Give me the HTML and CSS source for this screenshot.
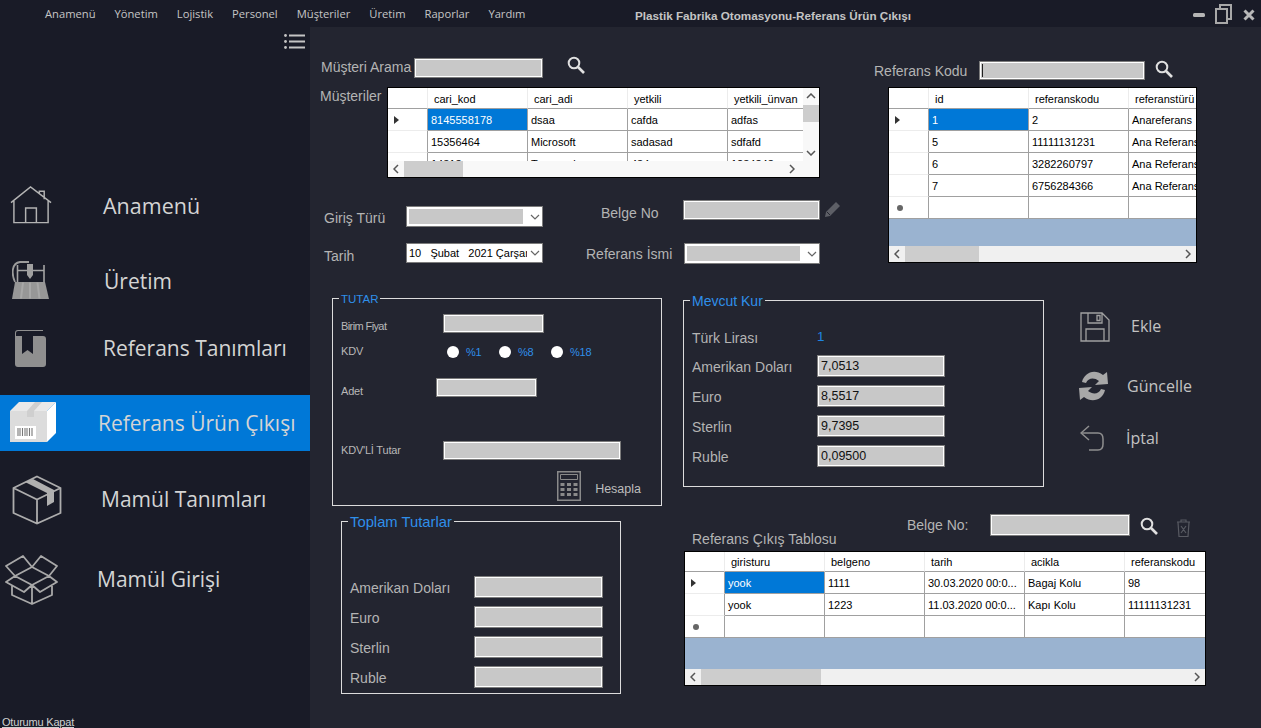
FILE: index.html
```html
<!DOCTYPE html>
<html lang="tr">
<head>
<meta charset="utf-8">
<title>Plastik Fabrika Otomasyonu-Referans Ürün Çıkışı</title>
<link rel="stylesheet" href="styles.css">
</head>
<body>
<div class="app">
  <header class="titlebar">
    <nav class="menu">
      <span>Anamenü</span><span>Yönetim</span><span>Lojistik</span><span>Personel</span><span>Müşteriler</span><span>Üretim</span><span>Raporlar</span><span>Yardım</span>
    </nav>
    <div class="title">Plastik Fabrika Otomasyonu-Referans Ürün Çıkışı</div>
    <div class="winbtns">
      <svg class="wb-min" viewBox="0 0 12 4"><rect width="12" height="4" rx="1.5" fill="#b5b5b5"/></svg>
      <svg class="wb-max" viewBox="0 0 17 20"><path d="M5 5V1h11v14h-4M1 5h11v14H1z" fill="none" stroke="#a8a8a8" stroke-width="2"/></svg>
      <svg class="wb-close" viewBox="0 0 12 12"><path d="M1.5 1.5l9 9M10.500 1.500l-9 9" stroke="#b8b8b8" stroke-width="3"/></svg>
    </div>
  </header>
  <div class="body">
    <aside class="sidebar">
      <div class="hamburger">
        <svg viewBox="0 0 21 15" class="ham-icon"><g fill="#c4c4c4"><circle cx="1.500" cy="1.500" r="1.400"/><circle cx="1.500" cy="7.500" r="1.400"/><circle cx="1.500" cy="13.500" r="1.400"/><rect x="5" y="0.500" width="16" height="2"/><rect x="5" y="6.500" width="16" height="2"/><rect x="5" y="12.500" width="16" height="2"/></g></svg>
      </div>
      <ul class="side-list">
        <li class="side-item si-home">
          <svg class="si-icon ic-home" viewBox="0 0 44 42"><path d="M1 17.500L21 1.500l21 16M4 16v22h35V16M16 38V23h11v15M30 9V6h5v8" fill="none" stroke="#b3b3b3" stroke-width="1.500"/></svg>
          <span>Anamenü</span>
        </li>
        <li class="side-item si-uretim">
          <svg class="si-icon ic-cnc" viewBox="0 0 38 38"><path d="M3 21C-1 12 0 2 8 1h9" fill="none" stroke="#9c9c9c" stroke-width="1.800"/><path d="M5.500 4v17M32 4v17M5.500 9.500H32" stroke="#a4a4a4" stroke-width="1.600" fill="none"/><path d="M15 3h6v11l-3 4-3-4z" fill="#a0a0a0"/><path d="M3 21h30l4 17H0z" fill="#979797"/><path d="M11 21.500l-2 16M18 21.500v16M25.500 21.500l2 16" stroke="#a8a8a8" stroke-width="2"/></svg>
          <span>Üretim</span>
        </li>
        <li class="side-item si-tanim">
          <svg class="si-icon ic-book" viewBox="0 0 31 37"><path d="M0 3Q0 0 3 0h25v1H3Q1 1 1 3v3h27q3 0 3 3v25q0 3-3 3H3q-3 0-3-3z" fill="#8f8f8f"/><path d="M7 6h11v18l-5.500-4-5.500 4z" fill="#191b27"/></svg>
          <span>Referans Tanımları</span>
        </li>
        <li class="side-item si-cikis active">
          <svg class="si-icon ic-pack" viewBox="0 0 46 40"><path d="M0 9L9 0h37l-9 9z" fill="#e9e9e9"/><path d="M0 9h37v31H0z" fill="#dcdcdc"/><path d="M37 9l9-9v31l-9 9z" fill="#fff"/><path d="M24 9l8-9h-7l-8 9v6h7z" fill="#cfcfcf"/><rect x="5" y="24" width="21" height="13" fill="#fff"/><path d="M8 26v8M10 26v8M12.500 26v8M15 26v8M17 26v8M19.500 26v8M22 26v8" stroke="#777" stroke-width="1.100"/></svg>
          <span>Referans Ürün Çıkışı</span>
        </li>
        <li class="side-item si-mamul">
          <svg class="si-icon ic-box" viewBox="0 0 50 50"><path d="M25 1.500L48.500 13v25L25 48.500 1.500 38V13zM1.500 13L25 24.500 48.500 13M25 24.500v24" fill="none" stroke="#adadad" stroke-width="1.800"/><path d="M13 7l22 11v13l7-4V15L21 4z" fill="#b0b0b0"/></svg>
          <span>Mamül Tanımları</span>
        </li>
        <li class="side-item si-giris">
          <svg class="si-icon ic-open" viewBox="0 0 53 50"><path d="M27 12L10 21l17 9 17-9zM10 21L1 27l18 10 8-7 8 7 17-10-8-6M27 30v19M7 31v9l20 9 20-9v-9M27 12L18 1 1 11l9 10M27 12l9-11 16 10-8 10" fill="none" stroke="#a8a8a8" stroke-width="1.800" stroke-linejoin="round"/></svg>
          <span>Mamül Girişi</span>
        </li>
      </ul>
      <a class="logout">Oturumu Kapat</a>
    </aside>

    <main class="main">
      <section class="upper">
        <div class="upper-left">
          <div class="search-row">
            <label class="lbl lbl-musteri">Müşteri Arama</label>
            <div class="field f-search"></div>
            <svg class="ic-search s-one" viewBox="0 0 18 18"><circle cx="7" cy="7" r="5.300" fill="none" stroke="#e0e0e0" stroke-width="2"/><path d="M11 11l6 6" stroke="#e0e0e0" stroke-width="2.600"/></svg>
          </div>
          <div class="customers-row">
            <label class="lbl lbl-cust">Müşteriler</label>
            <div class="dgv dgv-cust">
              <div class="dgv-view">
                <table class="dg">
                  <colgroup><col class="c-head"><col class="c-data"><col class="c-data"><col class="c-data"><col class="c-data"></colgroup>
                  <thead><tr><th></th><th>cari_kod</th><th>cari_adi</th><th>yetkili</th><th>yetkili_ünvan</th></tr></thead>
                  <tbody>
                    <tr><td class="rh"><i class="cur"></i></td><td class="sel">8145558178</td><td>dsaa</td><td>cafda</td><td>adfas</td></tr>
                    <tr><td class="rh"></td><td>15356464</td><td>Microsoft</td><td>sadasad</td><td>sdfafd</td></tr>
                    <tr><td class="rh"></td><td>14313</td><td>Tomurcuk</td><td>434</td><td>1234343</td></tr>
                  </tbody>
                </table>
              </div>
              <div class="vbar">
                <svg class="chev" viewBox="0 0 10 6"><path d="M1 5l4-4 4 4" fill="none" stroke="#555" stroke-width="1.500"/></svg>
                <div class="vthumb"></div>
                <svg class="chev chev-end" viewBox="0 0 10 6"><path d="M1 1l4 4 4-4" fill="none" stroke="#555" stroke-width="1.500"/></svg>
              </div>
              <div class="hbar">
                <svg class="chev-h" viewBox="0 0 6 10"><path d="M5 1L1 5l4 4" fill="none" stroke="#555" stroke-width="1.500"/></svg>
                <div class="hthumb th-cust"></div>
                <svg class="chev-h chev-end-h" viewBox="0 0 6 10"><path d="M1 1l4 4-4 4" fill="none" stroke="#555" stroke-width="1.500"/></svg>
              </div>
            </div>
          </div>
          <div class="entry-grid">
            <label class="lbl eg-giris">Giriş Türü</label>
            <div class="combo eg-combo"><div class="combo-fill"></div><svg class="chev-d" viewBox="0 0 10 6"><path d="M1 1l4 4 4-4" fill="none" stroke="#666" stroke-width="1.200"/></svg></div>
            <label class="lbl eg-belge">Belge No</label>
            <div class="eg-belgebox">
              <div class="field f-belge"></div>
              <svg class="ic-pencil" viewBox="0 0 17 17"><path d="M1 16l1-5L12 1l4 4L6 15z" fill="#5d5f66"/><path d="M3 11l3 3" stroke="#23252f" stroke-width="1"/></svg>
            </div>
            <label class="lbl eg-tarih">Tarih</label>
            <div class="combo date"><span class="date-text">10&nbsp;&nbsp;&nbsp;Şubat&nbsp;&nbsp;&nbsp;2021 Çarşamba</span><svg class="chev-d" viewBox="0 0 10 6"><path d="M1 1l4 4 4-4" fill="none" stroke="#666" stroke-width="1.200"/></svg></div>
            <label class="lbl eg-ref">Referans İsmi</label>
            <div class="combo eg-refcombo"><div class="combo-fill"></div><svg class="chev-d" viewBox="0 0 10 6"><path d="M1 1l4 4 4-4" fill="none" stroke="#666" stroke-width="1.200"/></svg></div>
          </div>
        </div>
        <div class="upper-right">
          <div class="search-row ref-search">
            <label class="lbl lbl-refkod">Referans Kodu</label>
            <div class="field f-ref"><i class="caret"></i></div>
            <svg class="ic-search" viewBox="0 0 18 18"><circle cx="7" cy="7" r="5.300" fill="none" stroke="#e0e0e0" stroke-width="2"/><path d="M11 11l6 6" stroke="#e0e0e0" stroke-width="2.600"/></svg>
          </div>
          <div class="dgv dgv-ref">
            <div class="dgv-view blue">
              <table class="dg">
                <colgroup><col class="c-head"><col class="c-data"><col class="c-data"><col class="c-data"></colgroup>
                <thead><tr><th></th><th>id</th><th>referanskodu</th><th>referanstürü</th></tr></thead>
                <tbody>
                  <tr><td class="rh"><i class="cur"></i></td><td class="sel">1</td><td>2</td><td>Anareferans</td></tr>
                  <tr><td class="rh"></td><td>5</td><td>11111131231</td><td>Ana Referans</td></tr>
                  <tr><td class="rh"></td><td>6</td><td>3282260797</td><td>Ana Referans</td></tr>
                  <tr><td class="rh"></td><td>7</td><td>6756284366</td><td>Ana Referans</td></tr>
                  <tr><td class="rh"><i class="star"></i></td><td></td><td></td><td></td></tr>
                </tbody>
              </table>
            </div>
            <div class="hbar">
              <svg class="chev-h" viewBox="0 0 6 10"><path d="M5 1L1 5l4 4" fill="none" stroke="#555" stroke-width="1.500"/></svg>
              <div class="hthumb th-ref"></div>
              <svg class="chev-h chev-end-h" viewBox="0 0 6 10"><path d="M1 1l4 4-4 4" fill="none" stroke="#555" stroke-width="1.500"/></svg>
            </div>
          </div>
        </div>
      </section>

      <section class="lower">
        <div class="lower-left">
          <div class="group g-tutar">
            <span class="legend lg-tutar">TUTAR</span>
            <div class="t-row tr-birim"><label class="sm">Birim Fiyat</label><div class="field f-tutar"></div></div>
            <div class="t-row tr-kdv">
              <label class="sm">KDV</label>
              <div class="radios">
                <span class="radio"></span><span class="radio-l r-1">%1</span>
                <span class="radio"></span><span class="radio-l r-8">%8</span>
                <span class="radio"></span><span class="radio-l">%18</span>
              </div>
            </div>
            <div class="t-row tr-adet"><label class="sm">Adet</label><div class="field f-tutar"></div></div>
            <div class="t-row tr-kdvli"><label class="sm">KDV'Lİ Tutar</label><div class="field f-kdvli"></div></div>
            <div class="calc-row">
              <svg class="ic-calc" viewBox="0 0 24 30"><path d="M.750.750h22.500v28.500H.750z" fill="none" stroke="#8a8a8a" stroke-width="1.500"/><path d="M3.500 3.500h17v5h-17z" fill="none" stroke="#8a8a8a"/><path d="M3.500 12h4v3h-4zM10 12h4v3h-4zM16.500 12h4v3h-4zM3.500 17h4v3h-4zM10 17h4v3h-4zM16.500 17h4v3h-4zM3.500 22h4v3h-4zM10 22h4v3h-4zM16.500 22h4v3h-4z" fill="#8a8a8a"/></svg>
              <span class="hesapla">Hesapla</span>
            </div>
          </div>
          <div class="group g-toplam">
            <span class="legend lg-toplam">Toplam Tutarlar</span>
            <div class="rate-row"><label class="lbl">Amerikan Doları</label><div class="field f-total"></div></div>
            <div class="rate-row"><label class="lbl">Euro</label><div class="field f-total"></div></div>
            <div class="rate-row"><label class="lbl">Sterlin</label><div class="field f-total"></div></div>
            <div class="rate-row"><label class="lbl">Ruble</label><div class="field f-total"></div></div>
          </div>
        </div>
        <div class="lower-right">
          <div class="kur-actions">
            <div class="group g-kur">
              <span class="legend lg-kur">Mevcut Kur</span>
              <div class="lira-row"><label class="lbl">Türk Lirası</label><span class="lira">1</span></div>
              <div class="rate-row kr"><label class="lbl">Amerikan Doları</label><div class="field f-kur">7,0513</div></div>
              <div class="rate-row kr"><label class="lbl">Euro</label><div class="field f-kur">8,5517</div></div>
              <div class="rate-row kr"><label class="lbl">Sterlin</label><div class="field f-kur">9,7395</div></div>
              <div class="rate-row kr"><label class="lbl">Ruble</label><div class="field f-kur">0,09500</div></div>
            </div>
            <div class="actions">
              <div class="action a-ekle">
                <svg class="ic-save" viewBox="0 0 30 30"><path d="M1 1h21l7 7v21H1zM8 1v10h14V1M6 29V17h18v12M17 3.500h3v5h-3z" fill="none" stroke="#a0a0a0" stroke-width="1.300"/></svg>
                <span>Ekle</span>
              </div>
              <div class="action a-guncel">
                <svg class="ic-refresh" viewBox="0 0 33 34"><path d="M5 13C7 4 17-1 26 6l4-3 1 12-13 1 4-4c-5-4-11-3-13 2z" fill="#a8a8a8"/><path d="M28 21c-2 9-12 14-21 7l-4 3-1-12 13-1-4 4c5 4 11 3 13-2z" fill="#a8a8a8"/></svg>
                <span>Güncelle</span>
              </div>
              <div class="action a-iptal">
                <svg class="ic-back" viewBox="0 0 24 26"><path d="M9 1L1 8l8 7" fill="none" stroke="#8f8f8f" stroke-width="1.500"/><path d="M1 8h17q5 0 5 6v5q0 6-5 6H9" fill="none" stroke="#8f8f8f" stroke-width="1.500"/></svg>
                <span>İptal</span>
              </div>
            </div>
          </div>
          <div class="out-head">
            <label class="lbl out-title">Referans Çıkış Tablosu</label>
            <label class="lbl out-belge">Belge No:</label>
            <div class="field f-out"></div>
            <svg class="ic-search s-out" viewBox="0 0 18 18"><circle cx="7" cy="7" r="5.300" fill="none" stroke="#e0e0e0" stroke-width="2"/><path d="M11 11l6 6" stroke="#e0e0e0" stroke-width="2.600"/></svg>
            <svg class="ic-trash" viewBox="0 0 15 18"><path d="M1 3h13M5 2.500V1h5v1.500M2 3.500l1 14h9l1-14M5 7l5 7M10 7l-5 7" fill="none" stroke="#585a62" stroke-width="1.200"/></svg>
          </div>
          <div class="dgv dgv-out">
            <div class="dgv-view blue">
              <table class="dg">
                <colgroup><col class="c-head"><col class="c-data"><col class="c-data"><col class="c-data"><col class="c-data"><col class="c-data"></colgroup>
                <thead><tr><th></th><th>giristuru</th><th>belgeno</th><th>tarih</th><th>acikla</th><th>referanskodu</th></tr></thead>
                <tbody>
                  <tr><td class="rh"><i class="cur"></i></td><td class="sel">yook</td><td>1111</td><td>30.03.2020 00:0...</td><td>Bagaj Kolu</td><td>98</td></tr>
                  <tr><td class="rh"></td><td>yook</td><td>1223</td><td>11.03.2020 00:0...</td><td>Kapı Kolu</td><td>11111131231</td></tr>
                  <tr><td class="rh"><i class="star"></i></td><td></td><td></td><td></td><td></td><td></td></tr>
                </tbody>
              </table>
            </div>
            <div class="hbar">
              <svg class="chev-h" viewBox="0 0 6 10"><path d="M5 1L1 5l4 4" fill="none" stroke="#555" stroke-width="1.500"/></svg>
              <div class="hthumb th-out"></div>
              <svg class="chev-h chev-end-h" viewBox="0 0 6 10"><path d="M1 1l4 4-4 4" fill="none" stroke="#555" stroke-width="1.500"/></svg>
            </div>
          </div>
        </div>
      </section>
    </main>
  </div>
</div>
</body>
</html>
```

FILE: styles.css
```css
* { box-sizing: border-box; }
html, body { margin: 0; padding: 0; }
body { width: 1261px; height: 728px; overflow: hidden; background: #232530; font-family: "Liberation Sans", Arial, sans-serif; }
.app { width: 1261px; height: 728px; display: flex; flex-direction: column; }

/* title bar */
.titlebar { height: 27px; flex: none; background: #191b27; display: flex; align-items: center; }
.menu { width: 635px; flex: none; padding-left: 45px; display: flex; gap: 19px; font: 11.2px "Open Sans", sans-serif; color: #c6c6c6; margin-top: -1px; }
.title { font: bold 11.7px "Liberation Sans", sans-serif; color: #c4c4c4; margin-top: 4px; white-space: nowrap; }
.winbtns { margin-left: auto; display: flex; align-items: center; padding-right: 6px; }
.wb-min { width: 12px; height: 4px; margin-top: 2px; }
.wb-max { width: 17px; height: 20px; margin-left: 10px; }
.wb-close { width: 12px; height: 12px; margin-left: 11px; margin-top: 3px; }

/* sidebar */
.body { flex: 1; display: flex; min-height: 0; }
.sidebar { width: 310px; flex: none; background: #191b27; display: flex; flex-direction: column; }
.hamburger { height: 151px; display: flex; justify-content: flex-end; padding: 7px 5px 0 0; flex: none; }
.ham-icon { width: 21px; height: 15px; }
.side-list { list-style: none; margin: 0; padding: 0; font: 21px "Open Sans", sans-serif; color: #d4d4d4; flex: none; }
.side-item { height: 56px; display: flex; align-items: center; }
.si-icon { flex: none; }
.si-home { padding-left: 10px; font-size: 21.5px; }
.si-home span, .si-mamul span, .si-giris span { margin-bottom: 2px; }
.ic-home { width: 43px; height: 42px; margin-right: 50px; }
.si-uretim { margin-top: 19px; padding-left: 12px; }
.ic-cnc { width: 38px; height: 38px; margin-right: 54px; margin-top: -2px; }
.si-tanim { margin-top: 11px; padding-left: 15px; }
.ic-book { width: 31px; height: 37px; margin-right: 57px; }
.si-cikis { margin-top: 19px; padding-left: 10px; }
.ic-pack { width: 46px; height: 40px; margin-right: 42px; margin-top: -3px; }
.active { background: #0078d7; }
.si-mamul { margin-top: 21px; padding-left: 12px; }
.ic-box { width: 50px; height: 50px; margin-right: 39px; }
.si-giris { margin-top: 24px; padding-left: 5px; }
.ic-open { width: 53px; height: 50px; margin-right: 39px; }
.logout { margin-top: auto; padding-left: 2px; font: 11px "Liberation Sans", sans-serif; letter-spacing: -.2px; color: #d0d0d0; text-decoration: underline; line-height: 12px; }

/* main */
.main { flex: 1; min-width: 0; display: flex; flex-direction: column; }
.lbl { font-size: 14px; color: #b4b4b4; line-height: 16px; white-space: nowrap; }
.field { border: 1px solid #7c7c7c; box-shadow: inset 0 0 0 1px #fff; background: #c8c8c8; font-size: 13px; color: #111; }
.upper { height: 238px; flex: none; display: flex; }
.upper-left { width: 564px; flex: none; padding-top: 31px; }
.search-row { display: flex; align-items: flex-start; padding-left: 11px; height: 29px; }
.search-row .lbl { margin-top: 1px; }
.lbl-musteri { width: 93px; flex: none; }
.f-search { width: 129px; height: 20px; flex: none; }
.ic-search { width: 18px; height: 18px; flex: none; }
.s-one { margin-left: 24px; margin-top: -2px; }
.customers-row { display: flex; padding-left: 10px; align-items: flex-start; }
.lbl-cust { width: 67px; margin-top: 1px; flex: none; }
.dgv { border: 1px solid #000; background: #fff; display: grid; overflow: hidden; }
.dgv-cust { width: 433px; height: 91px; grid-template-columns: 415px 16px; grid-template-rows: 73px 16px; }
.dgv-view { overflow: hidden; min-width: 0; min-height: 0; background: #fff; }
.blue { background: #9ab3d0; }
.dg { border-collapse: separate; border-spacing: 0; table-layout: fixed; font-size: 11px; color: #000; background: #fff; }
.dgv-cust .dg { width: 440px; }
.dgv-ref .dg { width: 340px; }
.dgv-out .dg { width: 540px; }
.c-head { width: 40px; }
.c-data { width: 100px; }
.dg th { height: 21px; padding: 1px 0 0 6px; font-weight: normal; text-align: left; border-right: 1px solid #ececec; border-bottom: 1px solid #a0a0a0; background: #fff; overflow: hidden; white-space: nowrap; }
.dgv-out .dg th { height: 20px; }
.dg td { height: 22px; padding: 0 0 0 3px; border-right: 1px solid #a0a0a0; border-bottom: 1px solid #a0a0a0; overflow: hidden; white-space: nowrap; background: #fff; }
.dg td.rh { border-right: 1px solid #a0a0a0; border-bottom: 1px solid #ececec; padding: 0 0 0 6px; }
.dg tr:last-child td.rh { border-bottom-color: #a0a0a0; }
.dg td.sel { background: #0078d7; color: #fff; }
.cur { display: block; width: 0; height: 0; border-left: 5px solid #333; border-top: 4.500px solid transparent; border-bottom: 4.500px solid transparent; }
.star { display: block; width: 6px; height: 6px; border-radius: 50%; background: #666; margin-left: 2px; }
.vbar { background: #f8f8f8; grid-row: 1; grid-column: 2; display: flex; flex-direction: column; align-items: center; padding-top: 5px; }
.chev { width: 10px; height: 6px; flex: none; }
.chev-end { margin-top: auto; margin-bottom: 5px; }
.vthumb { width: 16px; height: 17px; background: #cdcdcd; margin-top: 6px; }
.hbar { background: #f0f0f0; display: flex; align-items: center; padding: 0 5px; height: 16px; }
.dgv-cust .hbar { grid-row: 2; grid-column: 1 / 3; background: #f8f8f8; }
.chev-h { width: 6px; height: 10px; flex: none; }
.chev-end-h { margin-left: auto; }
.dgv-cust .chev-end-h { margin-right: 19px; }
.hthumb { height: 16px; background: #cdcdcd; flex: none; margin-left: 5px; }
.th-cust { width: 59px; }
.th-ref { width: 74px; }
.th-out { width: 120px; }

.entry-grid { display: grid; grid-template-columns: 82px 137px 43px 98px 136px auto; grid-template-rows: 27px 21px; row-gap: 16px; padding-left: 14px; margin-top: 22px; }
.eg-giris { align-self: end; margin-bottom: 1px; }
.eg-combo { margin-top: 6px; }
.eg-belge { grid-column: 4; margin-left: 15px; margin-top: 5px; }
.eg-belgebox { grid-column: 5 / 7; display: flex; align-items: flex-start; }
.f-belge { width: 137px; height: 20px; margin-left: -1px; flex: none; }
.ic-pencil { width: 17px; height: 17px; margin-left: 4px; margin-top: 1px; flex: none; }
.eg-tarih { align-self: center; margin-top: 4px; }
.eg-ref { grid-column: 4; align-self: center; }
.combo { background: #fff; border: 1px solid #7c7c7c; display: flex; align-items: center; padding: 0 2px 0 2px; overflow: hidden; }
.combo-fill { flex: 1; align-self: stretch; margin: 2px 7px 2px 0; background: #c8c8c8; }
.chev-d { width: 10px; height: 6px; flex: none; }
.date { height: 20px; padding-right: 2px; }
.date-text { flex: 1; min-width: 0; overflow: hidden; white-space: nowrap; font-size: 11px; color: #000; margin-right: 3px; }

.upper-right { flex: 1; min-width: 0; }
.ref-search { padding: 34px 0 0 0; height: 60px; }
.ref-search .lbl { margin-top: 2px; }
.lbl-refkod { width: 105px; flex: none; }
.f-ref { width: 166px; height: 19px; flex: none; display: flex; align-items: center; padding-left: 2px; }
.caret { width: 1px; height: 13px; background: #222; }
.ref-search .ic-search { margin-left: 10px; margin-top: -1px; }
.dgv-ref { width: 309px; height: 176px; margin-left: 14px; grid-template-rows: 158px 16px; }

/* lower */
.lower { display: flex; padding: 33px 0 0 22px; gap: 21px; }
.lower-left { width: 330px; flex: none; }
.group { border: 1px solid #dcdcdc; position: relative; }
.legend { position: absolute; background: #232530; color: #2f8fea; white-space: nowrap; line-height: 14px; padding: 0 2px; }
.g-tutar { height: 208px; padding: 15px 0 0 8px; }
.lg-tutar { left: 6px; top: -7px; font-size: 11.500px; }
.t-row { display: flex; align-items: center; }
.sm { font-size: 11px; color: #b8b8b8; letter-spacing: -.2px; white-space: nowrap; flex: none; }
.tr-birim .sm { width: 102px; margin-top: 4px; letter-spacing: -.6px; }
.tr-adet .sm { width: 95px; margin-top: 7px; }
.tr-kdvli .sm { width: 102px; margin-top: -2px; }
.tr-kdv { margin-top: 10px; height: 18px; }
.tr-kdv .sm { width: 106px; margin-top: -2px; }
.radios { display: flex; align-items: center; }
.radio { width: 12px; height: 12px; border-radius: 50%; background: #fff; flex: none; }
.radio-l { font-size: 11px; color: #2f8fea; letter-spacing: -.2px; margin-left: 7px; }
.r-1 { width: 33px; }
.r-8 { width: 33px; }
.f-tutar { width: 101px; height: 19px; flex: none; }
.tr-adet { margin-top: 17px; }
.tr-kdvli { margin-top: 44px; }
.f-kdvli { width: 178px; height: 19px; flex: none; }
.calc-row { display: flex; justify-content: flex-end; align-items: flex-start; margin-top: 11px; padding-right: 20px; }
.ic-calc { width: 24px; height: 30px; flex: none; }
.hesapla { font-size: 12.500px; color: #bdbdbd; margin-left: 14px; margin-top: 11px; }
.g-toplam { width: 280px; height: 173px; margin: 15px 0 0 9px; padding: 50px 17px 0 8px; }
.lg-toplam { left: 6px; top: -7px; font-size: 14.800px; }
.g-toplam .lbl { margin-top: 2px; }
.rate-row { display: flex; align-items: center; justify-content: space-between; height: 30px; }
.f-total { width: 129px; height: 22px; flex: none; }
.lower-right { flex: 1; min-width: 0; }
.kur-actions { display: flex; height: 216px; }
.g-kur { width: 361px; height: 187px; margin-top: 2px; padding: 23px 98px 0 8px; flex: none; }
.lg-kur { left: 6px; top: -7px; font-size: 14px; }
.lira-row { display: flex; height: 27px; align-items: center; }
.lira-row .lbl { width: 125px; flex: none; }
.lira { color: #1e84e2; font-size: 13.300px; margin-top: -2px; }
.kr .lbl { margin-top: 2px; }
.f-kur { width: 128px; height: 22px; padding: 1px 0 0 3px; line-height: 18px; font-size: 12.500px; flex: none; }
.actions { padding: 14px 0 0 33px; display: flex; flex-direction: column; color: #c2c2c2; font: 16px "Open Sans", sans-serif; }
.action { display: flex; align-items: center; }
.a-ekle { height: 30px; }
.a-ekle span { margin-bottom: 2px; }
.ic-save { width: 30px; height: 30px; margin: 0 21px 0 3px; flex: none; }
.a-guncel { margin-top: 27px; height: 34px; }
.ic-refresh { width: 33px; height: 34px; margin-right: 17px; flex: none; }
.a-iptal { margin-top: 22px; height: 26px; }
.ic-back { width: 24px; height: 26px; margin: 0 22px 0 3px; flex: none; }

.out-head { display: flex; height: 37px; align-items: flex-start; padding-left: 9px; }
.out-title { align-self: flex-end; margin-bottom: 4px; width: 215px; flex: none; }
.out-belge { margin-top: 3px; width: 83px; flex: none; }
.f-out { width: 140px; height: 22px; flex: none; }
.s-out { margin: 3px 0 0 10px; }
.ic-trash { width: 15px; height: 18px; margin: 5px 0 0 18px; flex: none; }
.dgv-out { width: 522px; height: 135px; margin-left: 1px; grid-template-rows: 117px 16px; }
```
